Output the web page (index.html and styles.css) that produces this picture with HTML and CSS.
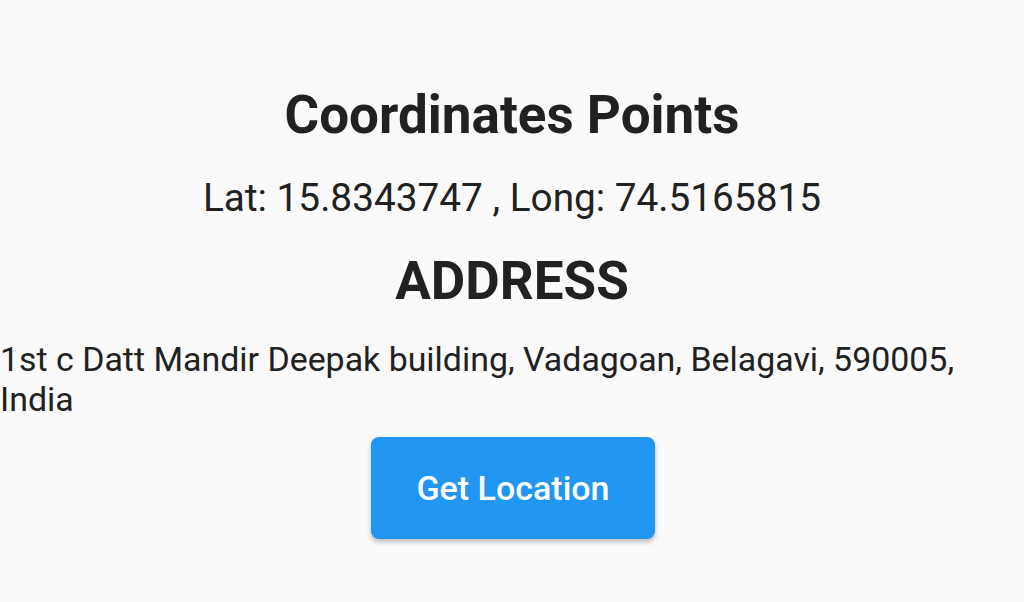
FILE: index.html
```html
<!DOCTYPE html>
<html>
<head>
<meta charset="utf-8">
<link rel="stylesheet" href="styles.css">
</head>
<body>
<main class="screen">
  <h1 class="title">Coordinates Points</h1>
  <p class="coords">Lat: 15.8343747 , Long: 74.5165815</p>
  <h2 class="heading">ADDRESS</h2>
  <p class="address">1st c Datt Mandir Deepak building, Vadagoan, Belagavi, 590005, India</p>
  <button class="btn">Get Location</button>
</main>
</body>
</html>
```

FILE: styles.css
```css
html, body {
  margin: 0;
  padding: 0;
  background: #fafafa;
}
.screen {
  width: 1024px;
  height: 602px;
  box-sizing: border-box;
  display: flex;
  flex-direction: column;
  align-items: center;
  padding-top: 82px;
  font-family: Roboto, "Liberation Sans", sans-serif;
  color: #212121;
}
.title {
  margin: 0;
  font-size: 53px;
  font-weight: 700;
  line-height: 66px;
}
.coords {
  margin: 28px 0 0;
  font-size: 38.75px;
  font-weight: 400;
  line-height: 44px;
}
.heading {
  margin: 29px 0 0;
  font-size: 53px;
  font-weight: 700;
  line-height: 64px;
}
.address {
  margin: 27px 0 0;
  align-self: stretch;
  font-size: 33.9px;
  line-height: 40px;
  text-align: left;
  padding-right: 50px;
}
.btn {
  margin-top: 17px;
  margin-left: 2px;
  width: 284px;
  height: 102px;
  border: none;
  border-radius: 8px;
  background: #2196f3;
  color: #fff;
  font-family: Roboto, "Liberation Sans", sans-serif;
  font-size: 34px;
  font-weight: 500;
  box-shadow: 0 3px 5px rgba(0,0,0,0.25);
}
```
